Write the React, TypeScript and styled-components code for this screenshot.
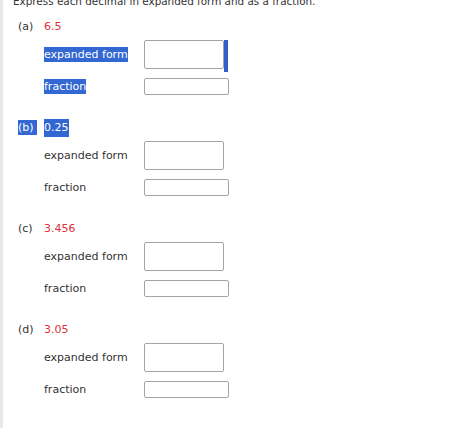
import React from "react";
import styled, { createGlobalStyle } from "styled-components";

const GlobalStyle = createGlobalStyle`
  html, body {
    margin: 0;
    padding: 0;
    background: #ffffff;
  }
  body {
    font-family: "DejaVu Sans", Verdana, sans-serif;
    font-size: 11px;
    color: #333333;
  }
`;

const Page = styled.div`
  min-height: 428px;
  box-sizing: border-box;
  border-left: 3px solid #e8e8e8;
  padding-left: 10px;
  overflow: hidden;
`;

const Prompt = styled.p`
  margin: -6px 0 0 0;
  font-size: 10.4px;
  line-height: 14px;
  white-space: nowrap;
`;

const Part = styled.section<{ first?: boolean }>`
  display: flex;
  flex-direction: column;
  margin-top: ${(p) => (p.first ? "11px" : "25px")};
  padding-left: 5px;
`;

const PartHead = styled.div`
  display: flex;
  align-items: center;
  height: 16px;
  line-height: 16px;
`;

const Letter = styled.span`
  width: 26px;
  flex-shrink: 0;
`;

const Value = styled.span`
  color: #e1313b;
`;

const Marked = styled.span`
  background: #3367d1;
  color: #ffffff;
  padding: 1px 0;
`;

const Row = styled.div<{ gap: number }>`
  display: flex;
  align-items: center;
  margin-top: ${(p) => p.gap}px;
  padding-left: 26px;
`;

const RowLabel = styled.span`
  width: 100px;
  flex-shrink: 0;
`;

const BoxWrap = styled.span`
  position: relative;
  display: inline-flex;
`;

const Field = styled.input<{ wide?: boolean }>`
  box-sizing: border-box;
  width: ${(p) => (p.wide ? "85px" : "80px")};
  height: ${(p) => (p.wide ? "17px" : "29px")};
  margin: 0;
  padding: 0 3px;
  border: 1px solid #a5a5a5;
  border-radius: 2px;
  background: #ffffff;
  font: inherit;
`;

const Caret = styled.span`
  position: absolute;
  left: 80px;
  top: 0;
  width: 4px;
  height: 32px;
  background: #3160c8;
`;

type Item = { letter: string; value: string; marked?: "rows" | "head"; caret?: boolean };

const items: Item[] = [
  { letter: "(a)", value: "6.5", marked: "rows", caret: true },
  { letter: "(b)", value: "0.25", marked: "head" },
  { letter: "(c)", value: "3.456" },
  { letter: "(d)", value: "3.05" },
];

function Question({ item, first }: { item: Item; first: boolean }) {
  const head = item.marked === "head";
  const rows = item.marked === "rows";
  return (
    <Part first={first}>
      <PartHead>
        <Letter>{head ? <Marked>{item.letter}&nbsp;</Marked> : item.letter}</Letter>
        {head ? <Marked>{item.value}</Marked> : <Value>{item.value}</Value>}
      </PartHead>
      <Row gap={5}>
        <RowLabel>{rows ? <Marked>expanded form</Marked> : "expanded form"}</RowLabel>
        <BoxWrap>
          <Field type="text" />
          {item.caret && <Caret />}
        </BoxWrap>
      </Row>
      <Row gap={9}>
        <RowLabel>{rows ? <Marked>fraction</Marked> : "fraction"}</RowLabel>
        <Field type="text" wide />
      </Row>
    </Part>
  );
}

export default function App() {
  return (
    <>
      <GlobalStyle />
      <Page>
        <Prompt>Express each decimal in expanded form and as a fraction.</Prompt>
        {items.map((item, i) => (
          <Question key={item.letter} item={item} first={i === 0} />
        ))}
      </Page>
    </>
  );
}
